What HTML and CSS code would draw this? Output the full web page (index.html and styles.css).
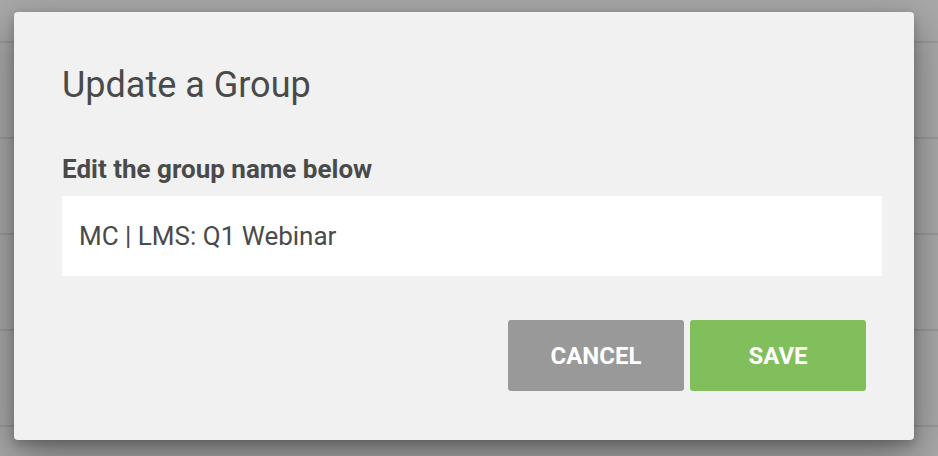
FILE: index.html
```html
<!DOCTYPE html>
<html>
<head>
<meta charset="utf-8">
<link rel="stylesheet" href="styles.css">
</head>
<body>
<div class="backdrop">
  <div class="row row-first"></div>
  <div class="row"></div>
  <div class="row"></div>
  <div class="row"></div>
  <div class="row"></div>
</div>
<div class="modal">
  <h1 class="title">Update a Group</h1>
  <label class="label" for="name">Edit the group name below</label>
  <input class="field" id="name" type="text" value="MC | LMS: Q1 Webinar">
  <div class="actions">
    <button class="btn btn-cancel">CANCEL</button>
    <button class="btn btn-save">SAVE</button>
  </div>
</div>
</body>
</html>
```
FILE: styles.css
```css
html, body {
  margin: 0;
  padding: 0;
  width: 938px;
  height: 456px;
  overflow: hidden;
}
body {
  background: #a8a8a8;
  font-family: Roboto, "Liberation Sans", sans-serif;
  position: relative;
}
.backdrop {
  display: flex;
  flex-direction: column;
}
.row {
  height: 94px;
  border-bottom: 2px solid #999999;
  flex: none;
}
.row-first {
  height: 41px;
}
.modal {
  position: absolute;
  left: 14px;
  top: 12px;
  width: 900px;
  box-sizing: border-box;
  padding: 52px 32px 49px 48px;
  background: #f1f1f1;
  border-radius: 4px;
  box-shadow: 0 14px 40px rgba(0, 0, 0, 0.4), 0 4px 10px rgba(0, 0, 0, 0.18);
  display: flex;
  flex-direction: column;
}
.title {
  margin: 0;
  font-size: 36px;
  font-weight: 400;
  line-height: normal;
  color: #4a4a4a;
}
.label {
  margin-top: 48px;
  font-size: 26px;
  font-weight: 700;
  color: #4a4a4a;
  line-height: normal;
}
.field {
  margin-top: 12px;
  height: 80px;
  box-sizing: border-box;
  border: none;
  outline: none;
  background: #ffffff;
  padding: 0 17px;
  font-family: Roboto, "Liberation Sans", sans-serif;
  font-size: 26px;
  color: #4a4a4a;
  width: 820px;
}
.actions {
  margin-top: 44px;
  display: flex;
  justify-content: flex-end;
  gap: 6px;
  padding-right: 16px;
}
.btn {
  width: 176px;
  height: 71px;
  border: none;
  border-radius: 3px;
  color: #ffffff;
  font-family: Roboto, "Liberation Sans", sans-serif;
  font-size: 24px;
  font-weight: 700;
  padding: 0;
}
.btn-cancel {
  background: #999999;
}
.btn-save {
  background: #81be5c;
}
```
